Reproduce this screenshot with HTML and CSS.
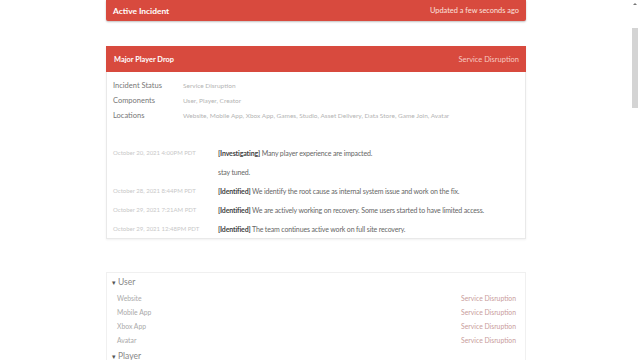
FILE: index.html
```html
<!DOCTYPE html>
<html lang="en">
<head>
  <meta charset="UTF-8">
  <meta name="viewport" content="width=device-width, initial-scale=1">
  <title>Status - Incident</title>
  <link rel="stylesheet" href="styles.css">
</head>
<body>
  <main class="page">
    <div class="active-bar">
      <span class="active-title">Active Incident</span>
      <span class="active-updated">Updated a few seconds ago</span>
    </div>

    <section class="incident">
      <div class="incident-head">
        <span class="incident-name">Major Player Drop</span>
        <span class="incident-impact">Service Disruption</span>
      </div>
      <div class="incident-body">
        <div class="info-row">
          <span class="info-label">Incident Status</span>
          <span class="info-value">Service Disruption</span>
        </div>
        <div class="info-row">
          <span class="info-label">Components</span>
          <span class="info-value">User, Player, Creator</span>
        </div>
        <div class="info-row">
          <span class="info-label">Locations</span>
          <span class="info-value">Website, Mobile App, Xbox App, Games, Studio, Asset Delivery, Data Store, Game Join, Avatar</span>
        </div>

        <ul class="updates">
          <li class="update">
            <span class="update-date">October 20, 2021 4:00PM PDT</span>
            <span class="update-text"><b>[Investigating]</b> Many player experience are impacted.</span>
          </li>
          <li class="update">
            <span class="update-date"></span>
            <span class="update-text">stay tuned.</span>
          </li>
          <li class="update">
            <span class="update-date">October 28, 2021 8:44PM PDT</span>
            <span class="update-text"><b>[Identified]</b> We identify the root cause as internal system issue and work on the fix.</span>
          </li>
          <li class="update">
            <span class="update-date">October 29, 2021 7:21AM PDT</span>
            <span class="update-text"><b>[Identified]</b> We are actively working on recovery. Some users started to have limited access.</span>
          </li>
          <li class="update">
            <span class="update-date">October 29, 2021 12:48PM PDT</span>
            <span class="update-text"><b>[Identified]</b> The team continues active work on full site recovery.</span>
          </li>
        </ul>
      </div>
    </section>

    <section class="components">
      <div class="group">
        <div class="group-name"><span class="caret">&#9662;</span>User</div>
        <div class="comp"><span>Website</span><span class="comp-status">Service Disruption</span></div>
        <div class="comp"><span>Mobile App</span><span class="comp-status">Service Disruption</span></div>
        <div class="comp"><span>Xbox App</span><span class="comp-status">Service Disruption</span></div>
        <div class="comp"><span>Avatar</span><span class="comp-status">Service Disruption</span></div>
      </div>
      <div class="group">
        <div class="group-name"><span class="caret">&#9662;</span>Player</div>
      </div>
    </section>
  </main>

  <div class="scroll-arrow"></div>
  <div class="scroll-thumb"></div>
</body>
</html>
```

FILE: styles.css
```css
* {
  margin: 0;
  padding: 0;
  box-sizing: border-box;
}

html, body {
  overflow: hidden;
}

body {
  font-family: 'Lato', 'Open Sans', sans-serif;
  background: #fff;
  color: #666;
  padding-right: 8px;
}

.page {
  width: 420px;
  margin: 0 auto;
}

/* fake window scrollbar */
.scroll-arrow {
  position: fixed;
  top: 3px;
  right: 3px;
  width: 0;
  height: 0;
  border-left: 2px solid transparent;
  border-right: 2px solid transparent;
  border-bottom: 2px solid #777;
}

.scroll-thumb {
  position: fixed;
  top: 28px;
  right: 2px;
  width: 6px;
  height: 80px;
  background: #d4d4d4;
}

/* top banner */
.active-bar {
  height: 21px;
  background: #d84a3e;
  border-radius: 0 0 2px 2px;
  box-shadow: 0 1px 2px rgba(0, 0, 0, 0.25);
  display: flex;
  align-items: center;
  justify-content: space-between;
  padding: 0 7px;
  color: #fff;
}

.active-title {
  font-size: 8.4px;
  font-weight: bold;
}

.active-updated {
  font-size: 7.4px;
  color: #fbe3df;
}

/* incident card */
.incident {
  margin-top: 25px;
  border: 1px solid #e9e9e9;
  border-top: none;
  box-shadow: 0 1px 2px rgba(0, 0, 0, 0.06);
}

.incident-head {
  height: 26px;
  background: #d84a3e;
  margin: 0 -1px;
  display: flex;
  align-items: center;
  justify-content: space-between;
  padding: 0 7px 0 8px;
}

.incident-name {
  font-size: 7.4px;
  font-weight: bold;
  color: #fff;
}

.incident-impact {
  font-size: 7.5px;
  color: #f7c9c1;
}

.incident-body {
  padding: 6px 6px 0 6px;
}

.info-row {
  height: 15px;
  display: flex;
  align-items: center;
}

.info-label {
  width: 70px;
  font-size: 7.5px;
  color: #777;
}

.info-value {
  font-size: 6.5px;
  color: #b4b4b4;
}

.updates {
  list-style: none;
  margin-top: 20px;
}

.update {
  height: 19px;
  display: flex;
  align-items: center;
}

.update-date {
  width: 105px;
  font-size: 6px;
  color: #c8c8c8;
}

.update-text {
  font-size: 7px;
  letter-spacing: -0.15px;
  color: #666;
}

.update-text b {
  color: #444;
}

/* component list */
.components {
  margin-top: 33px;
  border: 1px solid #f0f0f0;
  border-bottom: none;
  padding: 0 9px 0 5px;
}

.group-name {
  height: 18px;
  display: flex;
  align-items: center;
  font-size: 8.5px;
  color: #888;
}

.caret {
  font-size: 7px;
  margin-right: 2px;
  color: #555;
}

.comp {
  height: 14px;
  display: flex;
  align-items: center;
  justify-content: space-between;
  padding-left: 5px;
  font-size: 6.8px;
  color: #aaa;
}

.comp-status {
  color: #c99c9c;
}
```
